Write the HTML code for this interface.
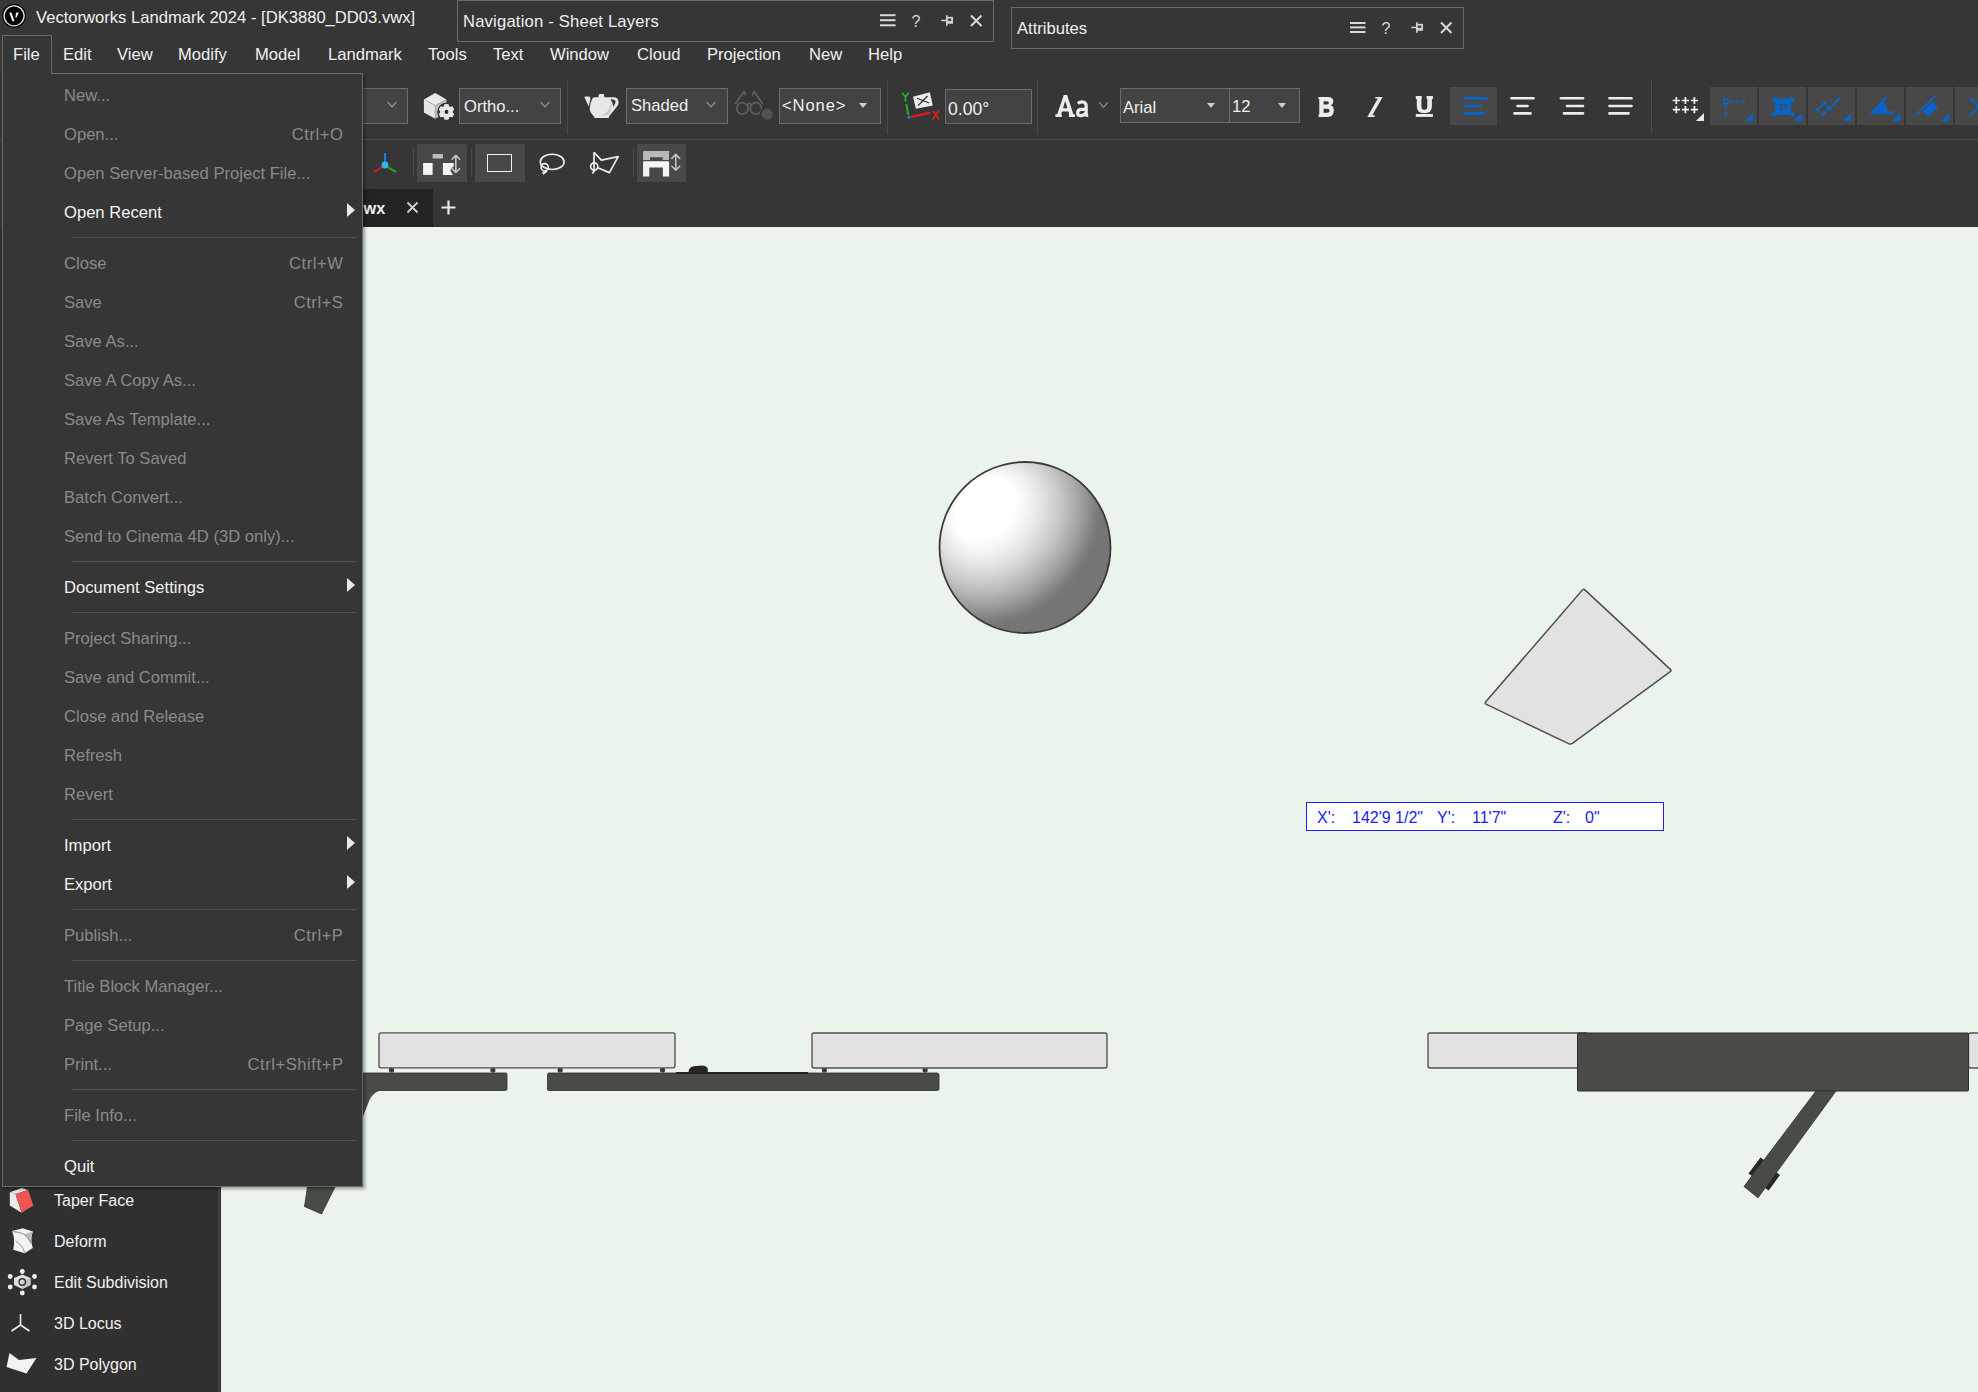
<!DOCTYPE html>
<html><head><meta charset="utf-8">
<style>
*{box-sizing:border-box;margin:0;padding:0}
html,body{width:1978px;height:1392px;overflow:hidden;background:#363636;font-family:"Liberation Sans",sans-serif;}
.a{position:absolute}
.t{position:absolute;white-space:pre;color:#f0f0f0;font-size:16.6px;line-height:20px}
.dd{position:absolute;background:#434343;border:1px solid #6c6c6c}
.sepv{position:absolute;width:1px;background:#4a4a4a;top:79px;height:55px}
.btn{position:absolute;background:#484848}
.mi{position:absolute;left:64px;white-space:pre;font-size:16.6px;line-height:20px;color:#8a8a8a}
.mi.en{color:#f2f2f2}
.sc{position:absolute;left:0;width:343.5px;letter-spacing:0.55px;white-space:pre;font-size:16.6px;line-height:20px;color:#8a8a8a;text-align:right}
.ms{position:absolute;left:72px;width:285px;height:1px;background:#505050}
.arr{position:absolute;left:347px;width:0;height:0;border-top:7.6px solid transparent;border-bottom:7.6px solid transparent;border-left:8.5px solid #e8e8e8}
.tool{position:absolute;left:54px;white-space:pre;font-size:16px;line-height:20px;color:#f2f2f2}
</style></head><body>
<!-- canvas -->
<div class="a" id="canvas" style="left:221px;top:227px;width:1757px;height:1165px;background:#eaf4ea"></div>
<svg class="a" style="left:930px;top:452px" width="190" height="190" viewBox="930 452 190 190">
<defs><radialGradient id="sph" gradientUnits="userSpaceOnUse" cx="0" cy="-0.35" fx="0" fy="-1.0" r="1.4" gradientTransform="translate(1025.0 547.5) rotate(-46.000) scale(85.5 68.400)"><stop offset="0.0156" stop-color="#ffffff"/><stop offset="0.0469" stop-color="#ffffff"/><stop offset="0.0781" stop-color="#ffffff"/><stop offset="0.1094" stop-color="#ffffff"/><stop offset="0.1406" stop-color="#ffffff"/><stop offset="0.1719" stop-color="#ffffff"/><stop offset="0.2031" stop-color="#ffffff"/><stop offset="0.2344" stop-color="#ffffff"/><stop offset="0.2656" stop-color="#ffffff"/><stop offset="0.2969" stop-color="#fdfdfd"/><stop offset="0.3281" stop-color="#f9f9f9"/><stop offset="0.3594" stop-color="#f5f5f5"/><stop offset="0.3906" stop-color="#f1f1f1"/><stop offset="0.4219" stop-color="#ececec"/><stop offset="0.4531" stop-color="#e6e6e6"/><stop offset="0.4844" stop-color="#e1e1e1"/><stop offset="0.5156" stop-color="#dadada"/><stop offset="0.5469" stop-color="#d4d4d4"/><stop offset="0.5781" stop-color="#cdcdcd"/><stop offset="0.6094" stop-color="#c6c6c6"/><stop offset="0.6406" stop-color="#bebebe"/><stop offset="0.6719" stop-color="#b6b6b6"/><stop offset="0.7031" stop-color="#aeaeae"/><stop offset="0.7344" stop-color="#a5a5a5"/><stop offset="0.7656" stop-color="#9c9c9c"/><stop offset="0.7969" stop-color="#929292"/><stop offset="0.8281" stop-color="#888888"/><stop offset="0.8594" stop-color="#7e7e7e"/><stop offset="0.8906" stop-color="#777777"/><stop offset="0.9219" stop-color="#757575"/><stop offset="0.9531" stop-color="#757575"/><stop offset="0.9844" stop-color="#757575"/></radialGradient></defs>
<circle cx="1025.0" cy="547.5" r="85.5" fill="url(#sph)" stroke="#3a3a3a" stroke-width="1.8"/>
</svg>
<svg class="a" style="left:0;top:0" width="1978" height="1392" viewBox="0 0 1978 1392">
<path d="M1582.8 589.5 Q1583.8 588.8 1584.6 589.6 L1670.6 669.6 Q1671.6 670.8 1670.3 671.7 L1572.4 743.4 Q1570.5 744.6 1568.6 743.6 L1486.4 704.4 Q1484.6 703.4 1485.8 701.8 Z" fill="#e2e2e2" stroke="#505050" stroke-width="1.5"/>
<!-- bottom objects -->
<path d="M200 1073 L506 1073 Q507 1073 507 1075 L507 1089 Q507 1090.5 505 1090.5 L200 1090.5 Z" fill="#484b46" stroke="#2e2e2e" stroke-width="0.8"/>
<path d="M351 1091 L379 1091 Q373 1093 369.5 1100 L335 1187 L307 1187 Z" fill="#484b46"/>
<path d="M307.5 1187 L335 1187 L321.5 1214 L304.5 1206.5 Z" fill="#484b46" stroke="#2e2e2e" stroke-width="0.8"/>
<path d="M549 1073 L937 1073 Q939 1073 939 1075 L939 1089 Q939 1090.5 937 1090.5 L549 1090.5 Q547.5 1090.5 547.5 1089 L547.5 1075 Q547.5 1073 549 1073 Z" fill="#484b46" stroke="#2e2e2e" stroke-width="0.8"/>
<path d="M676 1072 L808 1072 L808 1074 L676 1074 Z" fill="#222"/>
<path d="M688.5 1072 Q689 1067 693.5 1066.2 L702.5 1065.6 Q707.5 1066 707.8 1069.5 L707.8 1072 Z" fill="#262626"/>
<g fill="#3a3a3a"><circle cx="391.5" cy="1070" r="2.6"/><circle cx="492.9" cy="1070" r="2.6"/><circle cx="560.2" cy="1070" r="2.6"/><circle cx="662.5" cy="1070" r="2.6"/><circle cx="824.4" cy="1070" r="2.6"/><circle cx="925.1" cy="1070" r="2.6"/></g>
<rect x="379" y="1032.8" width="296" height="35" rx="2" fill="#e2e2e2" stroke="#505050" stroke-width="1.35"/>
<rect x="812" y="1033" width="295" height="35" rx="2" fill="#e2e2e2" stroke="#505050" stroke-width="1.35"/>
<rect x="1428" y="1033" width="160" height="35" rx="2" fill="#e2e2e2" stroke="#505050" stroke-width="1.35"/>
<rect x="1968.5" y="1033" width="20" height="35" rx="2" fill="#e2e2e2" stroke="#505050" stroke-width="1.35"/>
<rect x="1577.5" y="1033" width="391" height="58" rx="1" fill="#484b46" stroke="#2e2e2e" stroke-width="1"/>
<path d="M1764 1160 L1752 1176 L1748.5 1173.5 L1760.5 1157.5 Z M1776.5 1172.5 L1765.2 1188 L1768.7 1190.5 L1780 1175 Z" fill="#262626"/>
<path d="M1816 1091 L1836 1091 L1758 1197.8 L1744 1186.5 Z" fill="#484b46" stroke="#2e2e2e" stroke-width="0.8"/>
</svg>
<div class="a" style="left:1306px;top:802px;width:358px;height:29px;background:#fff;border:1.5px solid #2020f0"></div>
<div class="a" style="left:1317px;top:808px;font-size:16px;line-height:20px;color:#2222e0;white-space:pre">X':</div>
<div class="a" style="left:1352px;top:808px;font-size:16px;line-height:20px;color:#2222e0;white-space:pre">142'9 1/2"</div>
<div class="a" style="left:1437px;top:808px;font-size:16px;line-height:20px;color:#2222e0;white-space:pre">Y':</div>
<div class="a" style="left:1472px;top:808px;font-size:16px;line-height:20px;color:#2222e0;white-space:pre">11'7"</div>
<div class="a" style="left:1553px;top:808px;font-size:16px;line-height:20px;color:#2222e0;white-space:pre">Z':</div>
<div class="a" style="left:1585px;top:808px;font-size:16px;line-height:20px;color:#2222e0;white-space:pre">0"</div>
<!-- title bar -->
<div id="titlebar">
<svg class="a" style="left:0;top:0" width="30" height="32" viewBox="0 0 30 32">
<circle cx="14.1" cy="15.8" r="11.9" fill="#000"/>
<circle cx="14.1" cy="15.8" r="10" fill="none" stroke="#e8e8e8" stroke-width="1.3"/>
<path d="M9.2 12.5 L12.4 21.3 L14.6 21.3 L11.4 12.5 Z" fill="#f0f0f0"/>
<path d="M16 12.5 L18.8 12.5 L16.6 17.5 L15.4 17.5 Z" fill="#f0f0f0"/>
</svg>
<div class="t" style="left:36px;top:8px">Vectorworks Landmark 2024 - [DK3880_DD03.vwx]</div>
<!-- nav palette -->
<div class="a" style="left:457px;top:0px;width:537px;height:42px;border:1px solid #6a6a6a"></div>
<div class="t" style="left:463px;top:12px;letter-spacing:0.2px">Navigation - Sheet Layers</div>
<svg class="a" style="left:875px;top:10px" width="115" height="22" viewBox="0 0 115 22">
<g fill="#d8d8d8">
<rect x="5" y="4.2" width="15.5" height="2"/><rect x="5" y="9.2" width="15.5" height="2"/><rect x="5" y="14.3" width="15.5" height="2"/>
</g>
<text x="36.5" y="16.8" font-family="Liberation Sans" font-size="16" fill="#d8d8d8">?</text>
<g fill="#d0d0d0"><rect x="66.3" y="9.7" width="5" height="1.5"/><rect x="71" y="5.2" width="1.6" height="10.6"/><rect x="72" y="6.8" width="6" height="7"/></g><rect x="72.8" y="8.6" width="3.4" height="2.3" fill="#3a3a3a"/>
<path d="M96 5.5 L106.5 16 M106.5 5.5 L96 16" stroke="#d8d8d8" stroke-width="2"/>
</svg>
<!-- attributes palette -->
<div class="a" style="left:1011px;top:7px;width:453px;height:42px;border:1px solid #6a6a6a"></div>
<div class="t" style="left:1017px;top:19px">Attributes</div>
<svg class="a" style="left:1345px;top:17px" width="115" height="22" viewBox="0 0 115 22">
<g fill="#d8d8d8">
<rect x="5" y="5" width="15.5" height="2"/><rect x="5" y="9.4" width="15.5" height="2"/><rect x="5" y="14" width="15.5" height="2"/>
</g>
<text x="36.5" y="16.5" font-family="Liberation Sans" font-size="16" fill="#d8d8d8">?</text>
<g fill="#d0d0d0"><rect x="66.3" y="9.7" width="5" height="1.5"/><rect x="71" y="5.2" width="1.6" height="10.6"/><rect x="72" y="6.8" width="6" height="7"/></g><rect x="72.8" y="8.6" width="3.4" height="2.3" fill="#3a3a3a"/>
<path d="M96 5.5 L106.5 16 M106.5 5.5 L96 16" stroke="#d8d8d8" stroke-width="2"/>
</svg>
</div>
<!-- menu bar -->
<div id="menubar">
<div class="t" style="left:13px;top:45px">File</div>
<div class="t" style="left:63px;top:45px">Edit</div>
<div class="t" style="left:117px;top:45px">View</div>
<div class="t" style="left:178px;top:45px">Modify</div>
<div class="t" style="left:255px;top:45px">Model</div>
<div class="t" style="left:328px;top:45px">Landmark</div>
<div class="t" style="left:428px;top:45px">Tools</div>
<div class="t" style="left:493px;top:45px">Text</div>
<div class="t" style="left:550px;top:45px">Window</div>
<div class="t" style="left:637px;top:45px">Cloud</div>
<div class="t" style="left:707px;top:45px">Projection</div>
<div class="t" style="left:809px;top:45px">New</div>
<div class="t" style="left:868px;top:45px">Help</div>
</div>
<!-- toolbar -->
<div id="toolbar">
<div class="a" style="left:0;top:139px;width:1978px;height:1px;background:#4a4a4a"></div>
<!-- row1 -->
<div class="dd" style="left:300px;top:88px;width:108px;height:36px"></div>
<svg class="a" style="left:385px;top:99px" width="14" height="12"><path d="M2.5 3 L7 7.8 L11.5 3" fill="none" stroke="#8c8c8c" stroke-width="1.3"/></svg>
<svg class="a" style="left:418px;top:86px" width="42" height="38" viewBox="0 0 42 38">
<path d="M17.2 7.1 L28.5 13.4 L17.2 19.4 L5.9 13.4 Z" fill="#e9e9e9"/>
<path d="M5.9 13.4 L17.2 19.4 L17.2 32.8 L5.9 26.6 Z" fill="#e6e6e6"/>
<path d="M17.2 19.4 L28.5 13.4 L28.5 26.6 L17.2 32.8 Z" fill="#c2c2c2"/>
<path d="M9 15.1 L17.2 19.5 L27.5 14.2 M17.3 19.5 L17.3 32" fill="none" stroke="#a2a2a2" stroke-width="0.7"/>
<circle cx="28.5" cy="25.9" r="9.3" fill="#363636"/>
<path d="M25.87 20.51 L26.72 18.20 L30.28 18.20 L31.13 20.51 L31.86 20.93 L34.28 20.51 L36.05 23.59 L34.49 25.48 L34.49 26.32 L36.05 28.21 L34.28 31.29 L31.86 30.87 L31.13 31.29 L30.28 33.60 L26.72 33.60 L25.87 31.29 L25.14 30.87 L22.72 31.29 L20.95 28.21 L22.51 26.32 L22.51 25.48 L20.95 23.59 L22.72 20.51 L25.14 20.93 Z" fill="#e8e8e8"/>
<path d="M25.87 20.51 L26.72 18.20 L30.28 18.20 L31.13 20.51 L31.86 20.93 L34.28 20.51 L36.05 23.59 L34.49 25.48 L34.49 26.32 L36.05 28.21 L34.28 31.29 L31.86 30.87 L31.13 31.29 L30.28 33.60 L26.72 33.60 L25.87 31.29 L25.14 30.87 L22.72 31.29 L20.95 28.21 L22.51 26.32 L22.51 25.48 L20.95 23.59 L22.72 20.51 L25.14 20.93 Z" fill="#e8e8e8"/>
<ellipse cx="28.5" cy="25.9" rx="1.9" ry="2.1" fill="#2a2a2a"/>
</svg>
<div class="dd" style="left:459px;top:88px;width:102px;height:36px"></div>
<div class="t" style="left:464px;top:97px">Ortho...</div>
<svg class="a" style="left:538px;top:99px" width="14" height="12"><path d="M2.5 3 L7 7.8 L11.5 3" fill="none" stroke="#8c8c8c" stroke-width="1.3"/></svg>
<div class="sepv" style="left:567px"></div>
<svg class="a" style="left:578px;top:86px" width="46" height="36" viewBox="0 0 46 36">
<path d="M6.4 11 Q6.3 10.6 7 10.6 L11.2 10.6 Q12.6 10.8 12.4 13 L10.7 20.6 Z" fill="#e8e8e8"/>
<path fill-rule="evenodd" fill="#e8e8e8" d="M14.3 13 Q14.5 11.2 16.5 11.2 L20.6 11.2 L20.6 9.2 Q20.8 8 22 8 L25 8 Q26.2 8 26.2 9.2 L26.2 11.2 L35.5 11.2 Q40.5 11.2 40.6 16.5 Q40.6 18.5 39 20.5 L30.9 30.6 L30.9 32 L16.2 32 L16.2 30.6 Q11.8 26.5 11.7 22.5 Q11.8 17 14.3 13 Z M32.6 13.4 Q36.5 13 37.6 15.3 Q37.8 17 35.2 21 Q34.8 16 32.6 13.4 Z"/>
<path d="M32.3 14.5 Q35.5 24 30.5 29 L17.5 30 Q27 29.5 30.5 24 Q33.2 19 32.3 14.5 Z" fill="#cbcbcb"/>
</svg>
<div class="dd" style="left:626px;top:88px;width:102px;height:36px"></div>
<div class="t" style="left:631px;top:96px">Shaded</div>
<svg class="a" style="left:704px;top:99px" width="14" height="12"><path d="M2.5 3 L7 7.8 L11.5 3" fill="none" stroke="#8c8c8c" stroke-width="1.3"/></svg>
<svg class="a" style="left:733px;top:89px" width="46" height="34" viewBox="0 0 46 34">
<g fill="none" stroke="#5e5e5e" stroke-width="1.7" stroke-linecap="round"><path d="M2.6 14.5 L11 2.4 L12.5 5.8"/><path d="M29.5 14.5 L21.2 2.4 L19.7 5.8"/><circle cx="9.4" cy="19.4" r="5.7"/><circle cx="22.9" cy="19.4" r="5.7"/><path d="M14.6 15.2 Q17.4 13.3 17.8 15.2"/></g>
<circle cx="34.3" cy="25.1" r="6.6" fill="#525252" stroke="#363636" stroke-width="2"/>
</svg>
<div class="dd" style="left:779px;top:88px;width:102px;height:36px"></div>
<div class="t" style="left:782px;top:96px;letter-spacing:0.9px">&lt;None&gt;</div>
<svg class="a" style="left:857px;top:100px" width="12" height="10"><path d="M2 3 L10 3 L6 8 Z" fill="#cfcfcf"/></svg>
<div class="sepv" style="left:887px"></div>
<svg class="a" style="left:900px;top:89px" width="42" height="34" viewBox="0 0 42 34">
<path d="M2.6 4.3 L5.4 8 L8.2 4.3 M5.4 8 L5.4 11.8" fill="none" stroke="#1fb51f" stroke-width="1.7" stroke-linecap="round"/>
<path d="M6.4 15.8 L8.4 25.6" stroke="#1fb51f" stroke-width="2" stroke-linecap="round"/>
<path d="M11.5 27.9 L29.1 23.9" stroke="#e01b1b" stroke-width="2.2" stroke-linecap="round"/>
<circle cx="8.9" cy="28.3" r="1.6" fill="#1e78d8"/>
<path d="M33 22.3 Q36.5 25 38.5 30 M38.5 22.3 Q35 27 33 30" fill="none" stroke="#e01b1b" stroke-width="1.7" stroke-linecap="round"/>
<path d="M13 7.7 L29.8 3.3 L32.8 16.5 L15.9 19.8 Z" fill="#ececec"/>
<path d="M17 9.2 L29.1 14 M18.1 16.5 L27.6 7" stroke="#2a2a2a" stroke-width="1.1"/>
</svg>
<div class="dd" style="left:945px;top:89px;width:87px;height:35px"></div>
<div class="a" style="left:948px;top:98.5px;font-size:17.6px;line-height:20px;color:#f0f0f0;white-space:pre">0.00°</div>
<div class="sepv" style="left:1037px"></div>
<svg class="a" style="left:1050px;top:90px" width="62" height="32" viewBox="0 0 62 32">
<path fill-rule="evenodd" fill="#ececec" d="M5.4 26.9 H11.8 V24.3 H11.1 L12 21.4 H18.4 L19.3 24.3 H18.9 V26.9 H25 V24.3 H23.4 L17.1 4.9 H13.8 L7.2 24.3 H5.4 Z M13 18.2 H17.4 L15.2 10.8 Z"/>
<g fill="none" stroke="#ececec" stroke-width="3.2"><path d="M27.8 13.6 Q31 11 34 12.2 Q36.2 13.2 36.2 16.2 V24.8 Q36.4 25.6 38.2 25.6"/><path d="M36 19.4 H31.6 Q27.6 19.4 27.6 23 Q27.6 25.6 30.6 25.6 Q34 25.6 36 23"/></g>
<path d="M49.3 12.3 L53.5 17.3 L57.7 12.3" fill="none" stroke="#8c8c8c" stroke-width="1.3"/>
</svg>
<div class="dd" style="left:1120px;top:88px;width:110px;height:35px"></div>
<div class="dd" style="left:1229px;top:88px;width:71px;height:35px"></div>
<div class="t" style="left:1123px;top:98px">Arial</div>
<div class="t" style="left:1232px;top:97px">12</div>
<svg class="a" style="left:1205px;top:100px" width="12" height="10"><path d="M2 3 L10 3 L6 8 Z" fill="#cfcfcf"/></svg>
<svg class="a" style="left:1276px;top:100px" width="12" height="10"><path d="M2 3 L10 3 L6 8 Z" fill="#cfcfcf"/></svg>
<svg class="a" style="left:1316px;top:95px" width="22" height="24" viewBox="0 0 22 24"><path fill-rule="evenodd" fill="#ebebeb" d="M2.5 1.9 H12.3 Q17.3 1.9 17.3 6.5 Q17.3 9.3 14.8 10.3 Q17.8 11.3 17.8 15.5 Q17.8 21.9 11.5 21.9 H2.5 V19.5 H3.3 V4.3 H2.5 Z M7.6 6.2 V9.5 H10.9 Q12.9 9.5 12.9 7.85 Q12.9 6.2 10.9 6.2 Z M7.6 13.7 V17.7 H11.3 Q13.6 17.7 13.6 15.7 Q13.6 13.7 11.3 13.7 Z"/></svg>
<svg class="a" style="left:1365px;top:95px" width="22" height="24" viewBox="0 0 22 24"><path fill="#ebebeb" d="M10.5 1.9 H17.6 L16.8 3.5 L7.3 20.3 H9.9 L9.5 21.9 H2.4 L3.3 20.3 L12.8 3.5 H10.1 Z"/></svg>
<svg class="a" style="left:1414px;top:95px" width="22" height="24" viewBox="0 0 22 24"><path fill="#ebebeb" d="M1.8 0.9 H7.8 V3.9 H7.4 V11.5 Q7.4 14.8 10.3 14.8 Q13.3 14.8 13.3 11.5 V3.9 H12.6 V0.9 H18.9 V3.9 H17.9 V11.5 Q17.9 18.3 10.3 18.3 Q2.8 18.3 2.8 11.5 V3.9 H1.8 Z"/><rect x="1.8" y="19" width="17.1" height="2.9" fill="#ebebeb"/></svg>
<div class="btn" style="left:1450px;top:87px;width:47px;height:38px"></div>
<svg class="a" style="left:1460px;top:94px" width="30" height="24"><g stroke="#0a64c8" stroke-width="2.6" stroke-linecap="round"><path d="M4.5 4.3 L26.5 4.3"/><path d="M4.5 12 L20.5 12"/><path d="M4.5 19.4 L23.5 19.4"/></g></svg>
<svg class="a" style="left:1507px;top:94px" width="30" height="24"><g stroke="#ececec" stroke-width="2.6" stroke-linecap="round"><path d="M4.5 4.3 L26.5 4.3"/><path d="M10.5 12 L20.5 12"/><path d="M7.5 19.4 L23.5 19.4"/></g></svg>
<svg class="a" style="left:1557px;top:94px" width="30" height="24"><g stroke="#ececec" stroke-width="2.6" stroke-linecap="round"><path d="M4 4.3 L26 4.3"/><path d="M10 12 L26 12"/><path d="M7 19.4 L26 19.4"/></g></svg>
<svg class="a" style="left:1605px;top:94px" width="30" height="24"><g stroke="#ececec" stroke-width="2.6" stroke-linecap="round"><path d="M4.5 4.3 L26.5 4.3"/><path d="M4.5 12 L26.5 12"/><path d="M4.5 19.4 L23.5 19.4"/></g></svg>
<div class="sepv" style="left:1651px"></div>
<svg class="a" style="left:1660px;top:85px" width="50" height="40" viewBox="0 0 50 40"><g stroke="#f0f0f0" stroke-width="1.7">
<path d="M12.7 15.5 H19.9 M16.3 11.9 V19.1 M21.8 15.5 H29 M25.4 11.9 V19.1 M30.8 15.5 H38 M34.4 11.9 V19.1"/>
<path d="M12.7 24.6 H19.9 M16.3 21 V28.2 M21.8 24.6 H29 M25.4 21 V28.2 M30.8 24.6 H38 M34.4 21 V28.2"/></g>
<path d="M35.8 36 L44 36 L44 27.9 Z" fill="#e8e8e8"/></svg>
<div class="btn" style="left:1710px;top:87px;width:47px;height:38px"></div>
<div class="btn" style="left:1759px;top:87px;width:47px;height:38px"></div>
<div class="btn" style="left:1808px;top:87px;width:47px;height:38px"></div>
<div class="btn" style="left:1857px;top:87px;width:47px;height:38px"></div>
<div class="btn" style="left:1906px;top:87px;width:47px;height:38px"></div>
<div class="btn" style="left:1955px;top:87px;width:47px;height:38px"></div>
<svg class="a" style="left:1710px;top:87px" width="268" height="38" viewBox="0 0 268 38">
<g fill="#0a64c8">
<path d="M34.8 34 L43.1 34 L43.1 26 Z"/><path d="M83.8 34 L92.1 34 L92.1 26 Z"/><path d="M132.8 34 L141.1 34 L141.1 26 Z"/><path d="M181.8 34 L190.1 34 L190.1 26 Z"/><path d="M230.8 34 L239.1 34 L239.1 26 Z"/>
</g>
<g fill="none" stroke="#0a64c8" stroke-width="1.8" stroke-linecap="round">
<rect x="13.7" y="12.5" width="4.3" height="4.3" rx="0.8"/>
<path d="M20.8 14.3 H23.3 M26.5 14.3 H29.3 M32.5 14.3 H35.3 M15.8 19.6 V21.8 M15.8 25.3 V27.7"/>
</g>
<g fill="#0a64c8">
<path d="M65.2 11.3 H81 V27.9 H65.2 Z"/><circle cx="64.3" cy="12.4" r="2.3"/><circle cx="82.2" cy="12.4" r="2.3"/><circle cx="64.3" cy="27.2" r="2.3"/><circle cx="82.2" cy="27.2" r="2.3"/>
</g>
<circle cx="73" cy="19.6" r="2.6" fill="#0a64c8" stroke="#484848" stroke-width="1.2"/>
<g stroke="#0a64c8" stroke-width="1.8" fill="none" stroke-linecap="round">
<path d="M130.3 10.5 L122.8 18"/><path d="M116.3 24.2 L112.1 28.3"/>
<path d="M107.2 23 L114.8 15.8 M105.8 21.5 L108.6 24.5 M113.4 14.3 L116.2 17.3"/>
</g>
<circle cx="119.3" cy="21.1" r="2.7" fill="#0a64c8"/>
<path d="M159.9 26.7 L176 9.8 Q177.5 9.2 177.2 10.8 L173.3 14.8 Q177.5 18.5 177 24.7 L183.9 24.7 L183.9 26.7 Z" fill="#0a64c8" stroke="#0a64c8" stroke-width="0.6" stroke-linejoin="round"/>
<path d="M222.4 14.8 L228 20.1 L218.4 29.7 L212.8 24 Z" fill="#0a64c8"/>
<path d="M207.2 26.6 L224.9 9.5" stroke="#0a64c8" stroke-width="2" stroke-dasharray="2.6 2" stroke-linecap="round"/>
<path d="M260.4 11 L266 16.7 M260.4 28.2 L266 22.9" stroke="#0a64c8" stroke-width="1.8" stroke-linecap="round"/>
<circle cx="268" cy="19.6" r="2.4" fill="#0a64c8"/>
</svg>
<!-- row2 -->
<svg class="a" style="left:370px;top:150px" width="30" height="26" viewBox="0 0 30 26">
<path d="M15 3 L15 13" stroke="#1a7ee8" stroke-width="2"/>
<path d="M14 16 L4 22" stroke="#e01818" stroke-width="2"/>
<path d="M16 16 L26 22" stroke="#20b020" stroke-width="2"/>
<circle cx="15" cy="15" r="3.4" fill="#2bb8e8"/>
</svg>
<div class="sepv" style="left:413px;top:148px;height:29px"></div>
<div class="btn" style="left:417px;top:144px;width:50px;height:38px"></div>
<svg class="a" style="left:420px;top:150px" width="44" height="28" viewBox="0 0 44 28">
<rect x="3.1" y="13" width="9.5" height="11.9" fill="#f4f4f4"/>
<rect x="12.6" y="4" width="10.3" height="4.6" rx="0.6" fill="#bdbdbd"/>
<path d="M22.9 13 L33.7 13 L33.7 17 Q30 17.5 30.5 21 L33 24.9 L22.9 24.9 Z" fill="#f4f4f4"/>
<path d="M35.8 5.5 L35.8 22.3 M32 9.2 L35.8 5.3 L39.6 9.2 M32 18.6 L35.8 22.5 L39.6 18.6" fill="none" stroke="#c4c4c4" stroke-width="1.6" stroke-linecap="round" stroke-linejoin="round"/>
</svg>
<div class="sepv" style="left:471px;top:148px;height:29px"></div>
<div class="btn" style="left:475px;top:144px;width:50px;height:38px"></div>
<div class="a" style="left:487px;top:154px;width:25px;height:18px;border:1.6px solid #f0f0f0"></div>
<svg class="a" style="left:537px;top:150px" width="30" height="28" viewBox="0 0 30 28">
<g fill="none" stroke="#ececec" stroke-width="1.6"><ellipse cx="15.2" cy="11.9" rx="11.9" ry="7.6"/><circle cx="7.7" cy="17.2" r="3.6"/><path d="M10.2 20.8 L5.9 24.1 M5.5 22.7 L8.5 21.5"/></g>
</svg>
<svg class="a" style="left:587px;top:149px" width="36" height="28" viewBox="0 0 36 28">
<g fill="none" stroke="#ececec" stroke-width="1.7" stroke-linejoin="round"><path d="M7 3.3 L14.3 11.2 L31.2 7.6 L22.4 23.6 L10.7 18.8"/><path d="M7 3.3 L7 21.5"/><circle cx="7.2" cy="17.5" r="3.6"/><path d="M7.5 21.6 L5.4 24.6"/></g>
</svg>
<div class="sepv" style="left:633px;top:148px;height:29px"></div>
<div class="btn" style="left:637px;top:144px;width:49px;height:38px"></div>
<svg class="a" style="left:640px;top:148px" width="44" height="32" viewBox="0 0 44 32">
<path d="M3.1 4 Q3.1 3 4.1 3 L29.1 3 V12 H22.7 V9.2 H10 V12 H3.1 Z" fill="#b8b8b8"/>
<path d="M3.1 14.2 Q3.1 13.2 4.1 13.2 L28.1 13.2 Q29.1 13.2 29.1 14.2 V28.6 H22.9 V19.6 H9.3 V28.6 H3.1 Z" fill="#f4f4f4"/>
<path d="M35.8 6.6 L35.8 22 M31.9 10.4 L35.8 6.4 L39.7 10.4 M31.9 18.2 L35.8 22.2 L39.7 18.2" fill="none" stroke="#c0c0c0" stroke-width="1.6" stroke-linecap="round" stroke-linejoin="round"/>
</svg>
<!-- tab bar -->
<div class="a" style="left:300px;top:189px;width:133px;height:38px;background:#232323"></div>
<div class="a" style="left:363.5px;top:196.8px;font-weight:bold;font-size:16.3px;line-height:22px;color:#f0f0f0;white-space:pre">wx</div>
<svg class="a" style="left:403px;top:198px" width="20" height="20"><path d="M4.5 4.5 L14.5 14.5 M14.5 4.5 L4.5 14.5" stroke="#d0d0d0" stroke-width="1.8"/></svg>
<svg class="a" style="left:438px;top:198px" width="22" height="20"><path d="M3.5 9.5 L17.5 9.5 M10.5 2.5 L10.5 16.5" stroke="#eaeaea" stroke-width="2.2"/></svg>
</div>
<!-- tool panel -->
<div class="a" id="toolpanel" style="left:0;top:227px;width:221px;height:1165px;background:#303030"></div>
<div class="a" style="left:218px;top:227px;width:2px;height:1165px;background:#404040"></div>
<div class="tool" style="top:1191px">Taper Face</div>
<div class="tool" style="top:1232px">Deform</div>
<div class="tool" style="top:1273px">Edit Subdivision</div>
<div class="tool" style="top:1314px">3D Locus</div>
<div class="tool" style="top:1355px">3D Polygon</div>
<svg class="a" style="left:0;top:1180px" width="50" height="212" viewBox="0 0 50 212">
<!-- taper face -->
<path d="M9.8 12.3 L21.8 8 L28.2 10 L15.5 14.1 Z" fill="#e6e6e6"/>
<path d="M9.8 12.3 L15.5 14.1 L21.6 32.7 L9.8 25.6 Z" fill="#ebebeb"/>
<path d="M15.5 14.1 L28.2 10 L33.3 25.6 L21.6 32.7 Z" fill="#f25454"/>
<!-- deform -->
<path d="M12.1 51.1 L22.7 48.3 L32.8 51.4 Q30 59.5 32.8 68.1 L24.7 73.3 L13.2 69.8 Q15.5 60 12.1 51.1 Z" fill="#f2f2f2"/>
<path d="M24.1 54.3 L32.8 51.4 Q30.3 57 31 63.5 Q28.5 57.5 24.1 54.3 Z" fill="#bdbdbd"/>
<path d="M13 51.6 Q20 52 24.1 54.3 Q29 58 31 63.5 M15.5 61.2 Q22 64 24.7 72.5" fill="none" stroke="#777" stroke-width="0.8"/>
<!-- edit subdivision -->
<g fill="#f0f0f0"><circle cx="22.3" cy="91.5" r="2.4"/><circle cx="10.2" cy="96.5" r="2.4"/><circle cx="34.5" cy="96.5" r="2.4"/><circle cx="10.2" cy="107" r="2.4"/><circle cx="34.5" cy="107" r="2.4"/><circle cx="22.3" cy="113" r="2.4"/></g>
<path d="M14 98 L22.3 94.5 L30.5 98 L30.5 105 L22.3 109 L14 105 Z" fill="#dedede"/>
<path d="M22.3 101 L30.5 98 L30.5 105 L22.3 109 Z" fill="#c4c4c4"/>
<circle cx="22.3" cy="102" r="3.2" fill="none" stroke="#333" stroke-width="1.4"/>
<!-- 3d locus -->
<path d="M20.5 134 L20.5 145 M20.5 145 L11.5 151 M20.5 145 L29.5 151" stroke="#f0f0f0" stroke-width="1.6" fill="none"/>
<!-- 3d polygon -->
<path d="M9.5 173 L19 180 L36.5 178 L26.5 193.5 L6.5 187 Z" fill="#f2f2f2"/>
</svg>
<!-- menu -->
<div id="menu">
<div class="a" style="left:2px;top:73px;width:361px;height:1114px;background:#363636;border:1px solid #6a6a6a;box-shadow:2px 2px 3px rgba(0,0,0,0.35)"></div>
<div class="a" style="left:2px;top:35px;width:50px;height:39px;background:#363636;border:1px solid #6a6a6a;border-bottom:none"></div>
<div class="t" style="left:13px;top:45px">File</div>
<div class="mi" style="top:86.1px">New...</div>
<div class="mi" style="top:125.1px">Open...</div>
<div class="sc" style="top:125.1px">Ctrl+O</div>
<div class="mi" style="top:164.1px">Open Server-based Project File...</div>
<div class="mi en" style="top:203.1px">Open Recent</div>
<div class="arr" style="top:202.9px"></div>
<div class="ms" style="top:236.8px"></div>
<div class="mi" style="top:254.1px">Close</div>
<div class="sc" style="top:254.1px">Ctrl+W</div>
<div class="mi" style="top:293.1px">Save</div>
<div class="sc" style="top:293.1px">Ctrl+S</div>
<div class="mi" style="top:332.1px">Save As...</div>
<div class="mi" style="top:371.1px">Save A Copy As...</div>
<div class="mi" style="top:410.1px">Save As Template...</div>
<div class="mi" style="top:449.1px">Revert To Saved</div>
<div class="mi" style="top:488.1px">Batch Convert...</div>
<div class="mi" style="top:527.1px">Send to Cinema 4D (3D only)...</div>
<div class="ms" style="top:560.8px"></div>
<div class="mi en" style="top:578.1px">Document Settings</div>
<div class="arr" style="top:577.9px"></div>
<div class="ms" style="top:611.8px"></div>
<div class="mi" style="top:629.1px">Project Sharing...</div>
<div class="mi" style="top:668.1px">Save and Commit...</div>
<div class="mi" style="top:707.1px">Close and Release</div>
<div class="mi" style="top:746.1px">Refresh</div>
<div class="mi" style="top:785.1px">Revert</div>
<div class="ms" style="top:818.8px"></div>
<div class="mi en" style="top:836.1px">Import</div>
<div class="arr" style="top:835.9px"></div>
<div class="mi en" style="top:875.1px">Export</div>
<div class="arr" style="top:874.9px"></div>
<div class="ms" style="top:908.8px"></div>
<div class="mi" style="top:926.1px">Publish...</div>
<div class="sc" style="top:926.1px">Ctrl+P</div>
<div class="ms" style="top:959.8px"></div>
<div class="mi" style="top:977.1px">Title Block Manager...</div>
<div class="mi" style="top:1016.1px">Page Setup...</div>
<div class="mi" style="top:1055.1px">Print...</div>
<div class="sc" style="top:1055.1px">Ctrl+Shift+P</div>
<div class="ms" style="top:1088.8px"></div>
<div class="mi" style="top:1106.1px">File Info...</div>
<div class="ms" style="top:1139.8px"></div>
<div class="mi en" style="top:1157.1px">Quit</div>

</div>
</body></html>
